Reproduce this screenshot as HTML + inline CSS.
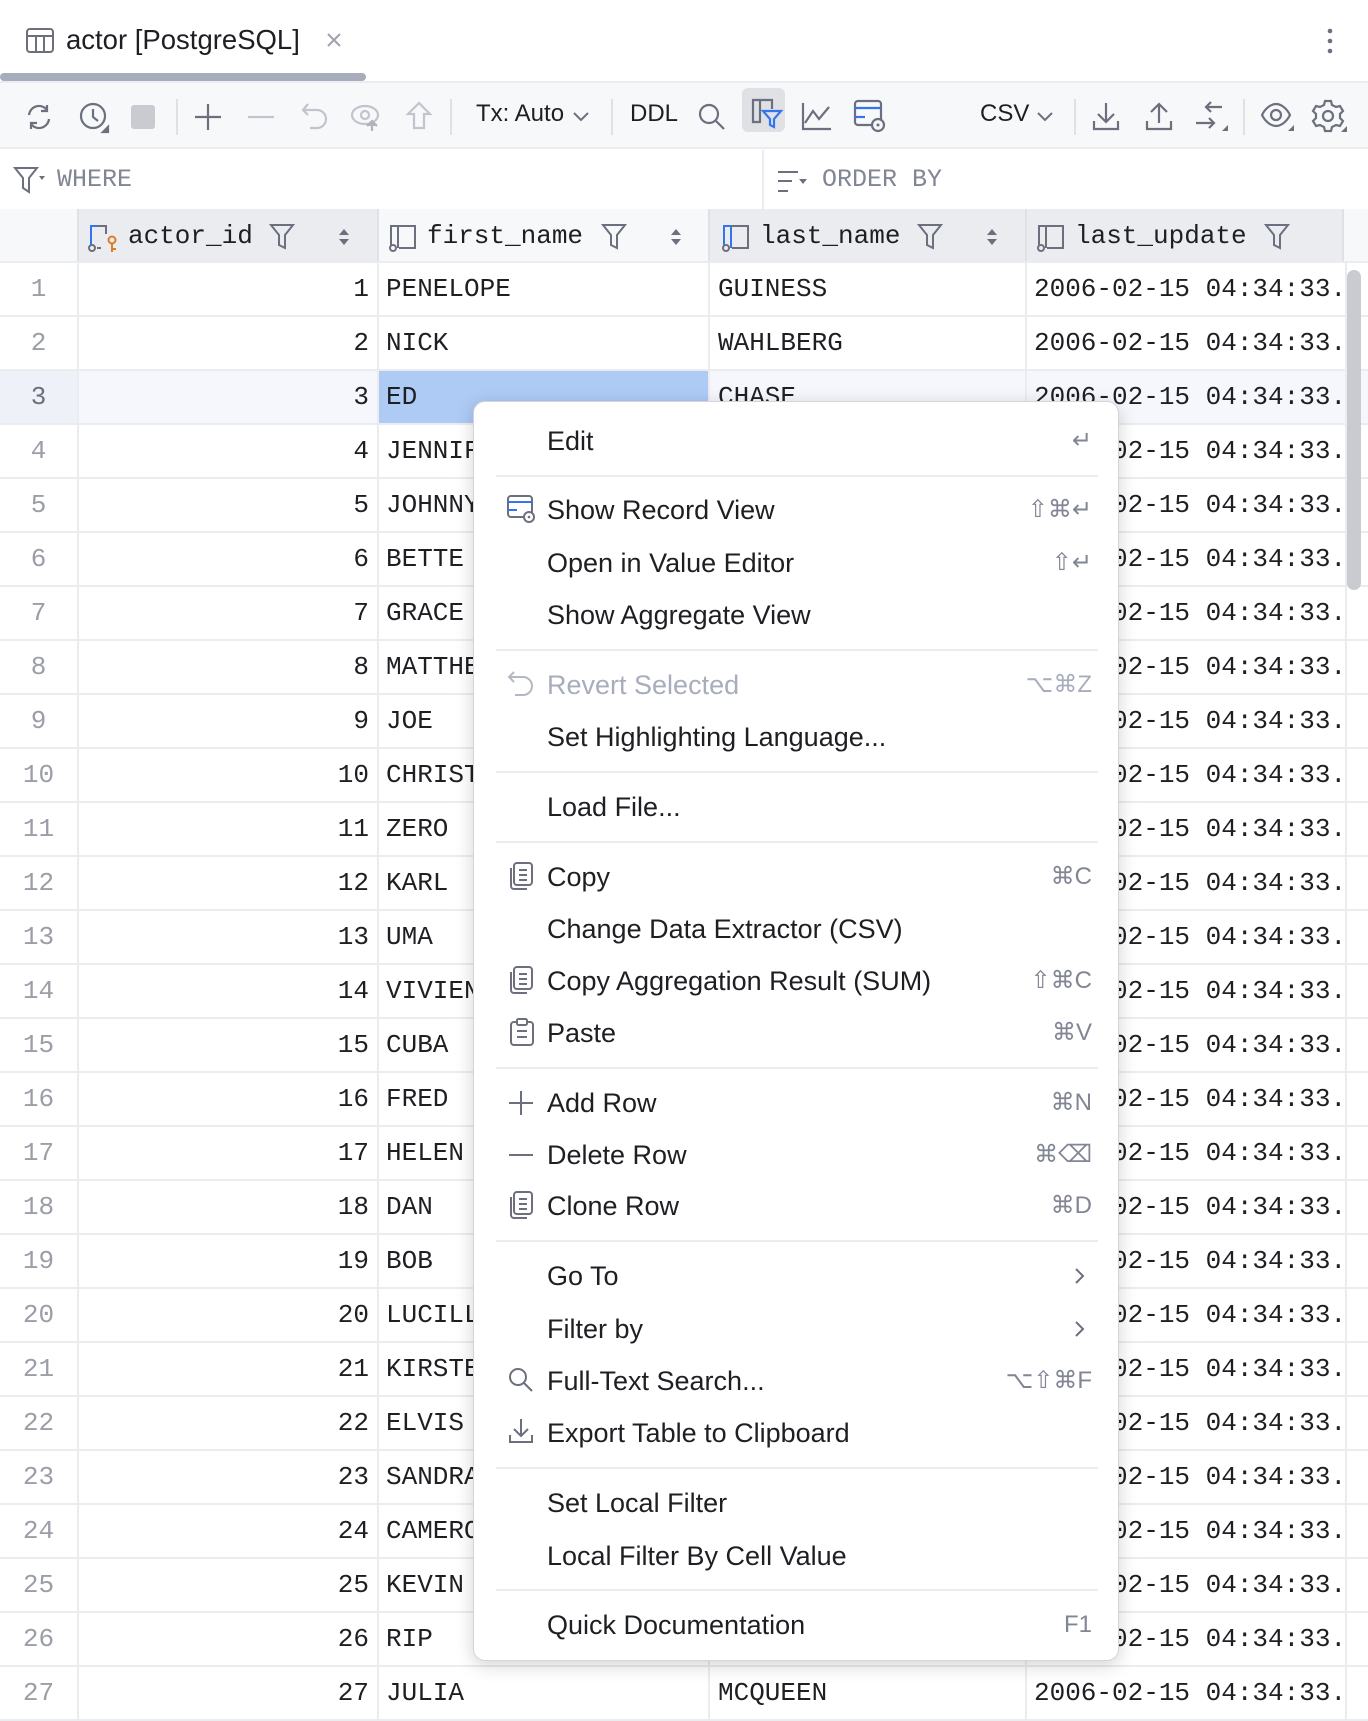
<!DOCTYPE html>
<html><head><meta charset="utf-8"><style>
*{box-sizing:border-box;margin:0;padding:0}
body{width:1368px;height:1710px;overflow:hidden;background:#fff;font-family:"Liberation Sans",sans-serif;position:relative;color:#1e1f22}
.abs{position:absolute}
.mono{font-family:"Liberation Mono","DejaVu Sans Mono",monospace}
svg{position:absolute;overflow:visible}
.tb{position:absolute;top:81px;left:0;width:1368px;height:68px;background:#f7f8fa;border-top:2px solid #ebecf0;border-bottom:2px solid #ebecf0}
.sep{position:absolute;top:16px;width:2px;height:36px;background:#dfe1e5}
.row{position:absolute;left:0;width:1368px;height:54px;border-bottom:2px solid #ebecf0;font-size:26px;font-family:"Liberation Mono","DejaVu Sans Mono",monospace;line-height:52px;white-space:nowrap}
.row div{position:absolute;top:0;height:52px;overflow:hidden;border-right:2px solid #ebecf0}
.c0{left:0;width:79px;text-align:center;color:#9b9ea6}
.c1{left:79px;width:300px;text-align:right;padding-right:8px}
.c2{left:379px;width:331px;padding-left:7px}
.c3{left:710px;width:317px;padding-left:8px}
.c4{left:1027px;width:320px;padding-left:7px}
.menu{position:absolute;left:473px;top:401px;width:646px;height:1260px;background:#fff;border:1px solid #d3d5da;border-radius:12px;box-shadow:0 4px 18px rgba(0,0,0,.18)}
.mi{position:absolute;left:73px;font-size:27px;line-height:30px;color:#1e1f22;white-space:nowrap}
.sc{position:absolute;right:26px;font-size:24px;line-height:30px;color:#818594;white-space:nowrap}
.ms{position:absolute;left:22px;width:602px;height:2px;background:#ebecf0}
.hd{position:absolute;top:209px;left:0;width:1368px;height:54px;background:#f7f8fa;border-bottom:2px solid #ebecf0}
.hc{position:absolute;top:0;height:52px;background:#ebecf0;border-right:2px solid #dfe1e5}
.ht{position:absolute;top:12px;font-size:26px;font-family:"Liberation Mono",monospace;color:#1e1f22}
</style></head><body>

<svg style="left:26px;top:28px" width="28" height="26" viewBox="0 0 28 26"><rect x="1" y="1" width="26" height="23" rx="3" fill="none" stroke="#6c707e" stroke-width="2"/><line x1="1" y1="8" x2="27" y2="8" stroke="#6c707e" stroke-width="2"/><line x1="10" y1="8" x2="10" y2="24" stroke="#6c707e" stroke-width="2"/><line x1="18" y1="8" x2="18" y2="24" stroke="#6c707e" stroke-width="2"/></svg>
<div class="abs" style="left:66px;top:24px;font-size:27.5px;color:#1e1f22">actor [PostgreSQL]</div>
<svg style="left:327px;top:33px" width="14" height="14"><path d="M1 1L13 13M13 1L1 13" stroke="#a0a3ad" stroke-width="2"/></svg>
<svg style="left:1327px;top:28px" width="6" height="26"><circle cx="3" cy="3" r="2.3" fill="#6c707e"/><circle cx="3" cy="13" r="2.3" fill="#6c707e"/><circle cx="3" cy="23" r="2.3" fill="#6c707e"/></svg>
<div class="abs" style="left:0;top:73px;width:366px;height:8px;border-radius:4px;background:#a8adbd"></div>

<div class="tb">
<svg style="left:24px;top:19px" width="30" height="30" viewBox="0 0 30 30" fill="none" stroke="#6c707e" stroke-width="2.2"><path d="M5 13a10 10 0 0 1 18-5M25 17a10 10 0 0 1-18 5"/><path d="M23 3v6h-6M7 27v-6h6"/></svg>
<svg style="left:78px;top:18px" width="34" height="34" viewBox="0 0 34 34" fill="none" stroke="#6c707e" stroke-width="2.2"><circle cx="15" cy="15" r="12"/><path d="M15 8v8l5 4"/><path d="M30 26v5h-5z" fill="#6c707e"/></svg>
<div class="abs" style="left:131px;top:22px;width:24px;height:24px;background:#c9cbd0;border-radius:3px"></div>
<div class="sep" style="left:176px"></div>
<svg style="left:194px;top:20px" width="28" height="28" stroke="#6c707e" stroke-width="2.2"><path d="M14 1v26M1 14h26"/></svg>
<svg style="left:247px;top:20px" width="28" height="28" stroke="#c1c4cc" stroke-width="2.2"><path d="M1 14h26"/></svg>
<svg style="left:300px;top:18px" width="30" height="30" fill="none" stroke="#c1c4cc" stroke-width="2.2"><path d="M8 3L3 9l5 5M3 9h14a9 9 0 0 1 0 18H10"/></svg>
<svg style="left:350px;top:18px" width="32" height="32" fill="none" stroke="#c1c4cc" stroke-width="2.2"><path d="M2 14a13 9 0 0 1 26 0a13 9 0 0 1-26 0z"/><circle cx="15" cy="14" r="4"/><path d="M22 30v-9M17 25l5-5 5 5" stroke="#b0b3bb" fill="#b0b3bb"/></svg>
<svg style="left:405px;top:18px" width="28" height="30" fill="none" stroke="#c1c4cc" stroke-width="2.2"><path d="M14 2L3 13h6v14h10V13h6z"/></svg>
<div class="sep" style="left:450px"></div>
<div class="abs" style="left:476px;top:17px;font-size:24px;color:#1e1f22">Tx: Auto</div>
<svg style="left:573px;top:29px" width="16" height="10" fill="none" stroke="#6c707e" stroke-width="2"><path d="M1 1l7 7 7-7"/></svg>
<div class="sep" style="left:611px"></div>
<div class="abs" style="left:630px;top:17px;font-size:24px;color:#1e1f22">DDL</div>
<svg style="left:698px;top:20px" width="28" height="28" fill="none" stroke="#6c707e" stroke-width="2.2"><circle cx="11" cy="11" r="9"/><path d="M18 18l8 8"/></svg>
<div class="abs" style="left:742px;top:5px;width:43px;height:44px;background:#dfe1e5;border-radius:6px"></div>
<svg style="left:750px;top:14px" width="32" height="32" fill="none" stroke-width="2.2"><path d="M22 12V3H3v22h8M10 3v22" stroke="#6c707e"/><path d="M13 14h18l-7 8v8l-4-2v-6z" stroke="#3574f0"/></svg>
<svg style="left:801px;top:18px" width="32" height="30" fill="none" stroke="#6c707e" stroke-width="2.2"><path d="M2 2v26h28"/><path d="M4 22l8-12 6 8 10-12"/></svg>
<svg style="left:853px;top:16px" width="34" height="34" fill="none" stroke-width="2.2"><rect x="2" y="2" width="26" height="24" rx="3" stroke="#6c707e"/><path d="M2 9h26" stroke="#3574f0"/><path d="M2 18h10" stroke="#3574f0"/><circle cx="25" cy="26" r="6" stroke="#6c707e" fill="#f7f8fa"/><circle cx="25" cy="26" r="1.5" fill="#6c707e"/></svg>
<div class="abs" style="left:980px;top:17px;font-size:24px;color:#1e1f22">CSV</div>
<svg style="left:1037px;top:29px" width="16" height="10" fill="none" stroke="#6c707e" stroke-width="2"><path d="M1 1l7 7 7-7"/></svg>
<div class="sep" style="left:1074px"></div>
<svg style="left:1092px;top:18px" width="28" height="30" fill="none" stroke="#6c707e" stroke-width="2.2"><path d="M14 2v19M6 13l8 8 8-8M2 20v8h24v-8"/></svg>
<svg style="left:1145px;top:18px" width="28" height="30" fill="none" stroke="#6c707e" stroke-width="2.2"><path d="M14 22V3M6 11l8-8 8 8M2 20v8h24v-8"/></svg>
<svg style="left:1194px;top:16px" width="36" height="34" fill="none" stroke="#6c707e" stroke-width="2.2"><path d="M28 8H12M17 3l-5 5 5 5M2 24h18M15 19l5 5-5 5"/><path d="M34 26v6h-6z" fill="#6c707e" stroke="none"/></svg>
<div class="sep" style="left:1243px"></div>
<svg style="left:1260px;top:18px" width="36" height="32" fill="none" stroke="#6c707e" stroke-width="2.2"><path d="M2 14C6 6 12 3 16 3s10 3 14 11c-4 8-10 11-14 11S6 22 2 14z"/><circle cx="16" cy="14" r="5"/><path d="M34 24v6h-6z" fill="#6c707e" stroke="none"/></svg>
<svg style="left:1312px;top:16px" width="36" height="34" fill="none" stroke="#6c707e" stroke-width="2.2"><path d="M13 2h6l1 4 4 2 4-1 3 5-3 3v4l3 3-3 5-4-1-4 2-1 4h-6l-1-4-4-2-4 1-3-5 3-3v-4l-3-3 3-5 4 1 4-2z"/><circle cx="16" cy="17" r="5"/><path d="M35 27v6h-6z" fill="#6c707e" stroke="none"/></svg>
</div>

<svg style="left:14px;top:166px" width="32" height="28" fill="none" stroke="#6c707e" stroke-width="2"><path d="M1 2h22l-8 10v14l-6-4V12z"/><path d="M25 10h6l-3 4z" fill="#6c707e" stroke="none"/></svg>
<div class="abs mono" style="left:57px;top:165px;font-size:25px;color:#818594">WHERE</div>
<div class="abs" style="left:762px;top:150px;width:2px;height:59px;background:#ebecf0"></div>
<svg style="left:777px;top:170px" width="32" height="24" fill="none" stroke="#6c707e" stroke-width="2"><path d="M1 2h20M1 11h14M1 21h10"/><path d="M22 9h8l-4 5z" fill="#6c707e" stroke="none"/></svg>
<div class="abs mono" style="left:822px;top:165px;font-size:25px;color:#818594">ORDER BY</div>

<div class="hd">
<div class="hc" style="left:0;width:79px;background:#f7f8fa"></div>
<div class="hc" style="left:79px;width:300px"></div>
<div class="hc" style="left:379px;width:331px;background:#f7f8fa"></div>
<div class="hc" style="left:710px;width:317px"></div>
<div class="hc" style="left:1027px;width:317px"></div>
<svg style="left:88px;top:14px" width="34" height="30" fill="none" stroke-width="2"><path d="M3 22V3h6" stroke="#3574f0"/><path d="M9 3h9v8M9 25h4" stroke="#6c707e"/><circle cx="4" cy="25" r="3" stroke="#6c707e"/><circle cx="24" cy="17" r="3.5" stroke="#e07b27"/><path d="M24 21v8M24 26h4" stroke="#e07b27"/></svg>
<div class="ht" style="left:128px">actor_id</div>
<svg style="left:270px;top:15px" width="24" height="26" fill="none" stroke="#6c707e" stroke-width="2"><path d="M1 1h22l-8 10v13l-6-3V11z"/></svg>
<svg style="left:338px;top:18px" width="12" height="20" fill="#6c707e"><path d="M6 2l5 6H1zM6 18l5-6H1z"/></svg>
<svg style="left:388px;top:14px" width="32" height="30" fill="none" stroke="#6c707e" stroke-width="2"><path d="M3 22V3h24v22H11M10 3v22"/><circle cx="5" cy="25" r="3"/></svg>
<div class="ht" style="left:427px">first_name</div>
<svg style="left:602px;top:15px" width="24" height="26" fill="none" stroke="#6c707e" stroke-width="2"><path d="M1 1h22l-8 10v13l-6-3V11z"/></svg>
<svg style="left:670px;top:18px" width="12" height="20" fill="#6c707e"><path d="M6 2l5 6H1zM6 18l5-6H1z"/></svg>
<svg style="left:721px;top:14px" width="32" height="30" fill="none" stroke-width="2"><path d="M3 22V3h7v22" stroke="#3574f0"/><path d="M10 3h17v22H11" stroke="#6c707e"/><circle cx="5" cy="25" r="3" stroke="#6c707e"/></svg>
<div class="ht" style="left:760px">last_name</div>
<svg style="left:918px;top:15px" width="24" height="26" fill="none" stroke="#6c707e" stroke-width="2"><path d="M1 1h22l-8 10v13l-6-3V11z"/></svg>
<svg style="left:986px;top:18px" width="12" height="20" fill="#6c707e"><path d="M6 2l5 6H1zM6 18l5-6H1z"/></svg>
<svg style="left:1036px;top:14px" width="32" height="30" fill="none" stroke="#6c707e" stroke-width="2"><path d="M3 22V3h24v22H11M10 3v22"/><circle cx="5" cy="25" r="3"/></svg>
<div class="ht" style="left:1075px">last_update</div>
<svg style="left:1265px;top:15px" width="24" height="26" fill="none" stroke="#6c707e" stroke-width="2"><path d="M1 1h22l-8 10v13l-6-3V11z"/></svg>
</div>

<div class="row" style="top:263px"><div class="c0">1</div><div class="c1">1</div><div class="c2">PENELOPE</div><div class="c3">GUINESS</div><div class="c4">2006-02-15 04:34:33.</div></div>
<div class="row" style="top:317px"><div class="c0">2</div><div class="c1">2</div><div class="c2">NICK</div><div class="c3">WAHLBERG</div><div class="c4">2006-02-15 04:34:33.</div></div>
<div class="row" style="top:371px;background:#f5f7fc"><div class="c0" style="background:#eef1f7;color:#6c707e">3</div><div class="c1">3</div><div class="c2" style="background:#aecbf6">ED</div><div class="c3">CHASE</div><div class="c4">2006-02-15 04:34:33.</div></div>
<div class="row" style="top:425px"><div class="c0">4</div><div class="c1">4</div><div class="c2">JENNIFER</div><div class="c3">DAVIS</div><div class="c4">2006-02-15 04:34:33.</div></div>
<div class="row" style="top:479px"><div class="c0">5</div><div class="c1">5</div><div class="c2">JOHNNY</div><div class="c3">LOLLOBRIGIDA</div><div class="c4">2006-02-15 04:34:33.</div></div>
<div class="row" style="top:533px"><div class="c0">6</div><div class="c1">6</div><div class="c2">BETTE</div><div class="c3">NICHOLSON</div><div class="c4">2006-02-15 04:34:33.</div></div>
<div class="row" style="top:587px"><div class="c0">7</div><div class="c1">7</div><div class="c2">GRACE</div><div class="c3">MOSTEL</div><div class="c4">2006-02-15 04:34:33.</div></div>
<div class="row" style="top:641px"><div class="c0">8</div><div class="c1">8</div><div class="c2">MATTHEW</div><div class="c3">JOHANSSON</div><div class="c4">2006-02-15 04:34:33.</div></div>
<div class="row" style="top:695px"><div class="c0">9</div><div class="c1">9</div><div class="c2">JOE</div><div class="c3">SWANK</div><div class="c4">2006-02-15 04:34:33.</div></div>
<div class="row" style="top:749px"><div class="c0">10</div><div class="c1">10</div><div class="c2">CHRISTIAN</div><div class="c3">GABLE</div><div class="c4">2006-02-15 04:34:33.</div></div>
<div class="row" style="top:803px"><div class="c0">11</div><div class="c1">11</div><div class="c2">ZERO</div><div class="c3">CAGE</div><div class="c4">2006-02-15 04:34:33.</div></div>
<div class="row" style="top:857px"><div class="c0">12</div><div class="c1">12</div><div class="c2">KARL</div><div class="c3">BERRY</div><div class="c4">2006-02-15 04:34:33.</div></div>
<div class="row" style="top:911px"><div class="c0">13</div><div class="c1">13</div><div class="c2">UMA</div><div class="c3">WOOD</div><div class="c4">2006-02-15 04:34:33.</div></div>
<div class="row" style="top:965px"><div class="c0">14</div><div class="c1">14</div><div class="c2">VIVIEN</div><div class="c3">BERGEN</div><div class="c4">2006-02-15 04:34:33.</div></div>
<div class="row" style="top:1019px"><div class="c0">15</div><div class="c1">15</div><div class="c2">CUBA</div><div class="c3">OLIVIER</div><div class="c4">2006-02-15 04:34:33.</div></div>
<div class="row" style="top:1073px"><div class="c0">16</div><div class="c1">16</div><div class="c2">FRED</div><div class="c3">COSTNER</div><div class="c4">2006-02-15 04:34:33.</div></div>
<div class="row" style="top:1127px"><div class="c0">17</div><div class="c1">17</div><div class="c2">HELEN</div><div class="c3">VOIGHT</div><div class="c4">2006-02-15 04:34:33.</div></div>
<div class="row" style="top:1181px"><div class="c0">18</div><div class="c1">18</div><div class="c2">DAN</div><div class="c3">TORN</div><div class="c4">2006-02-15 04:34:33.</div></div>
<div class="row" style="top:1235px"><div class="c0">19</div><div class="c1">19</div><div class="c2">BOB</div><div class="c3">FAWCETT</div><div class="c4">2006-02-15 04:34:33.</div></div>
<div class="row" style="top:1289px"><div class="c0">20</div><div class="c1">20</div><div class="c2">LUCILLE</div><div class="c3">TRACY</div><div class="c4">2006-02-15 04:34:33.</div></div>
<div class="row" style="top:1343px"><div class="c0">21</div><div class="c1">21</div><div class="c2">KIRSTEN</div><div class="c3">PALTROW</div><div class="c4">2006-02-15 04:34:33.</div></div>
<div class="row" style="top:1397px"><div class="c0">22</div><div class="c1">22</div><div class="c2">ELVIS</div><div class="c3">MARX</div><div class="c4">2006-02-15 04:34:33.</div></div>
<div class="row" style="top:1451px"><div class="c0">23</div><div class="c1">23</div><div class="c2">SANDRA</div><div class="c3">KILMER</div><div class="c4">2006-02-15 04:34:33.</div></div>
<div class="row" style="top:1505px"><div class="c0">24</div><div class="c1">24</div><div class="c2">CAMERON</div><div class="c3">STREEP</div><div class="c4">2006-02-15 04:34:33.</div></div>
<div class="row" style="top:1559px"><div class="c0">25</div><div class="c1">25</div><div class="c2">KEVIN</div><div class="c3">BLOOM</div><div class="c4">2006-02-15 04:34:33.</div></div>
<div class="row" style="top:1613px"><div class="c0">26</div><div class="c1">26</div><div class="c2">RIP</div><div class="c3">CRAWFORD</div><div class="c4">2006-02-15 04:34:33.</div></div>
<div class="row" style="top:1667px"><div class="c0">27</div><div class="c1">27</div><div class="c2">JULIA</div><div class="c3">MCQUEEN</div><div class="c4">2006-02-15 04:34:33.</div></div>

<div class="abs" style="left:1347px;top:270px;width:14px;height:320px;border-radius:7px;background:#c9cbd0"></div>

<div class="menu">
<div class="mi" style="top:24px">Edit</div><div class="sc" style="top:24px">↵</div>
<div class="ms" style="top:73px"></div>
<svg style="left:33px;top:93px" width="30" height="30" fill="none" stroke-width="2"><rect x="1" y="1" width="24" height="21" rx="3" stroke="#6c707e"/><path d="M1 7h24" stroke="#3574f0"/><path d="M1 15h9" stroke="#3574f0"/><circle cx="22" cy="22" r="5" stroke="#6c707e" fill="#fff"/><circle cx="22" cy="22" r="1.3" fill="#6c707e"/></svg>
<div class="mi" style="top:93px">Show Record View</div><div class="sc" style="top:93px">⇧⌘↵</div>
<div class="mi" style="top:146px">Open in Value Editor</div><div class="sc" style="top:146px">⇧↵</div>
<div class="mi" style="top:198px">Show Aggregate View</div>
<div class="ms" style="top:247px"></div>
<svg style="left:33px;top:268px" width="30" height="30" fill="none" stroke="#b4b8c2" stroke-width="2"><path d="M7 2L2 7l5 5M2 7h14a9 9 0 0 1 0 18H8"/></svg>
<div class="mi" style="top:268px;color:#a8adbd">Revert Selected</div><div class="sc" style="top:268px;color:#a8adbd">⌥⌘Z</div>
<div class="mi" style="top:320px">Set Highlighting Language...</div>
<div class="ms" style="top:369px"></div>
<div class="mi" style="top:390px">Load File...</div>
<div class="ms" style="top:439px"></div>
<svg style="left:35px;top:460px" width="26" height="28" fill="none" stroke="#6c707e" stroke-width="2"><rect x="5" y="1" width="18" height="22" rx="3"/><path d="M2 6v18a3 3 0 0 0 3 3h13M10 8h8M10 13h8M10 18h8"/></svg>
<div class="mi" style="top:460px">Copy</div><div class="sc" style="top:460px">⌘C</div>
<div class="mi" style="top:512px">Change Data Extractor (CSV)</div>
<svg style="left:35px;top:564px" width="26" height="28" fill="none" stroke="#6c707e" stroke-width="2"><rect x="5" y="1" width="18" height="22" rx="3"/><path d="M2 6v18a3 3 0 0 0 3 3h13M10 8h8M10 13h8M10 18h8"/></svg>
<div class="mi" style="top:564px">Copy Aggregation Result (SUM)</div><div class="sc" style="top:564px">⇧⌘C</div>
<svg style="left:35px;top:616px" width="26" height="28" fill="none" stroke="#6c707e" stroke-width="2"><rect x="2" y="4" width="22" height="23" rx="3"/><rect x="8" y="1" width="10" height="6" rx="1.5" fill="#fff"/><path d="M8 13h10M8 19h10"/></svg>
<div class="mi" style="top:616px">Paste</div><div class="sc" style="top:616px">⌘V</div>
<div class="ms" style="top:665px"></div>
<svg style="left:33px;top:687px" width="28" height="28" stroke="#6c707e" stroke-width="2"><path d="M14 2v24M2 14h24"/></svg>
<div class="mi" style="top:686px">Add Row</div><div class="sc" style="top:686px">⌘N</div>
<svg style="left:33px;top:739px" width="28" height="28" stroke="#6c707e" stroke-width="2"><path d="M2 14h24"/></svg>
<div class="mi" style="top:738px">Delete Row</div><div class="sc" style="top:738px">⌘⌫</div>
<svg style="left:35px;top:789px" width="26" height="28" fill="none" stroke="#6c707e" stroke-width="2"><rect x="5" y="1" width="18" height="22" rx="3"/><path d="M2 6v18a3 3 0 0 0 3 3h13M10 8h8M10 13h8M10 18h8"/></svg>
<div class="mi" style="top:789px">Clone Row</div><div class="sc" style="top:789px">⌘D</div>
<div class="ms" style="top:838px"></div>
<div class="mi" style="top:859px">Go To</div>
<svg style="left:600px;top:866px" width="10" height="16" fill="none" stroke="#6c707e" stroke-width="2"><path d="M2 1l7 7-7 7"/></svg>
<div class="mi" style="top:912px">Filter by</div>
<svg style="left:600px;top:919px" width="10" height="16" fill="none" stroke="#6c707e" stroke-width="2"><path d="M2 1l7 7-7 7"/></svg>
<svg style="left:34px;top:965px" width="26" height="26" fill="none" stroke="#6c707e" stroke-width="2"><circle cx="10" cy="10" r="8"/><path d="M16 16l8 8"/></svg>
<div class="mi" style="top:964px">Full-Text Search...</div><div class="sc" style="top:964px">⌥⇧⌘F</div>
<svg style="left:34px;top:1015px" width="26" height="28" fill="none" stroke="#6c707e" stroke-width="2"><path d="M13 2v17M6 12l7 7 7-7M2 18v7h22v-7"/></svg>
<div class="mi" style="top:1016px">Export Table to Clipboard</div>
<div class="ms" style="top:1065px"></div>
<div class="mi" style="top:1086px">Set Local Filter</div>
<div class="mi" style="top:1139px">Local Filter By Cell Value</div>
<div class="ms" style="top:1187px"></div>
<div class="mi" style="top:1208px">Quick Documentation</div><div class="sc" style="top:1208px">F1</div>
</div>

</body></html>
